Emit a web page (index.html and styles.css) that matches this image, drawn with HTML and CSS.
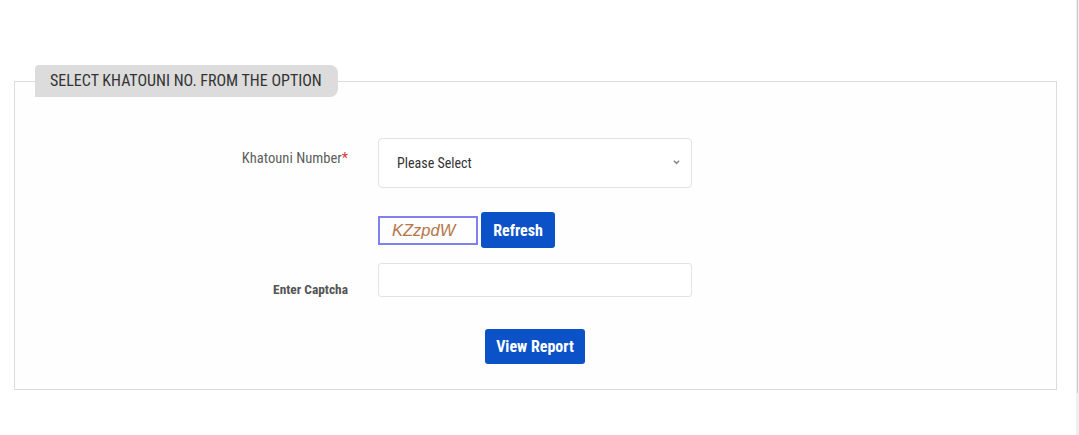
FILE: index.html
```html
<!DOCTYPE html>
<html lang="en">
<head>
<meta charset="utf-8">
<title>Select Khatouni</title>
<link rel="stylesheet" href="styles.css">
</head>
<body>
<div class="page">
  <main class="main">
    <fieldset class="panel">
      <legend class="panel-title">SELECT KHATOUNI NO. FROM THE OPTION</legend>
      <div class="row row-select">
        <label class="label">Khatouni Number<span class="req">*</span></label>
        <div class="control">
          <div class="select">
            <span>Please Select</span>
            <svg class="chev" width="7" height="6" viewBox="0 0 8 6"><path d="M1 1.5 L4 4.5 L7 1.5" fill="none" stroke="#8a8a8a" stroke-width="1.8"/></svg>
          </div>
        </div>
      </div>
      <div class="row row-captcha">
        <div class="label"></div>
        <div class="control captcha-line">
          <div class="captcha">KZzpdW</div>
          <button class="btn btn-refresh" type="button">Refresh</button>
        </div>
      </div>
      <div class="row row-input">
        <label class="label label-small">Enter Captcha</label>
        <div class="control">
          <input class="input" type="text">
        </div>
      </div>
      <div class="row row-submit">
        <div class="label"></div>
        <div class="control center">
          <button class="btn btn-view" type="button">View Report</button>
        </div>
      </div>
    </fieldset>
  </main>
  <div class="edge"><div class="edge-line"></div></div>
</div>
</body>
</html>
```
FILE: styles.css
```css
* { box-sizing: border-box; }
html, body { margin: 0; padding: 0; background: #fff; }
body { font-family: "Roboto Condensed", Roboto, "Noto Sans", "Liberation Sans", sans-serif; font-stretch: 80%; color: #333; }

.page { display: flex; width: 1079px; height: 435px; }
.main { flex: 1; padding: 65px 19px 0 14px; }
.edge { width: 3px; background: #f0f0f0; }
.edge-line { width: 1px; height: 393px; margin-left: 1px; background: #c9c9c9; }

.panel {
  margin: 0;
  border: 1px solid #dcdcdc;
  padding: 0 20px 25px 20px;
  min-width: 0;
  background: #fefefe;
}
.panel-title {
  background: #dcdcdc;
  padding: 0 15px;
  height: 32px;
  line-height: 32px;
  width: 303px;
  font-size: 16px;
  color: #333;
  border-radius: 4px 8px 8px 0;
  white-space: nowrap;
}

.row { display: flex; }
.label {
  width: 314px;
  text-align: right;
  color: #5e5e5e;
  font-size: 14.6px;
  flex: none;
}
.control { width: 314px; margin-left: 29px; flex: none; }

.row-select { margin-top: 41px; }
.row-select .label { padding-top: 11px; padding-right: 1px; }
.req { color: #e0343a; }
.select {
  height: 50px;
  border: 1px solid #e3e3e3;
  border-radius: 4px;
  display: flex;
  align-items: center;
  justify-content: space-between;
  padding: 0 11px 0 18px;
  font-size: 14px;
  color: #333;
  background: #fff;
}
.chev { margin-top: -3px; }

.row-captcha { margin-top: 24px; }
.captcha-line { display: flex; align-items: center; gap: 3px; }
.captcha {
  width: 100px;
  height: 29px;
  border: 2px solid #8080ef;
  font-family: "Liberation Sans", Arial, sans-serif;
  font-stretch: normal;
  font-style: italic;
  font-size: 16.5px;
  color: #b5764a;
  padding-left: 12px;
  line-height: 25px;
  margin-top: 1px;
}
.btn {
  background: #0b52c8;
  color: #fff;
  border: 0;
  border-radius: 3px;
  font-family: "Roboto Condensed", Roboto, "Noto Sans", sans-serif;
  font-stretch: 80%;
  font-weight: 700;
  font-size: 16px;
  padding: 0;
}
.btn-refresh { width: 74px; height: 36px; }

.row-input { margin-top: 15px; align-items: flex-end; }
.label-small { font-size: 13.4px; font-weight: 700; color: #555; padding-right: 1px; }
.input {
  display: block;
  width: 100%;
  height: 34px;
  border: 1px solid #e3e3e3;
  border-radius: 3px;
  background: #fff;
}

.row-submit { margin-top: 32px; }
.center { display: flex; justify-content: center; }
.btn-view { width: 100px; height: 35px; padding-bottom: 1px; }
```
